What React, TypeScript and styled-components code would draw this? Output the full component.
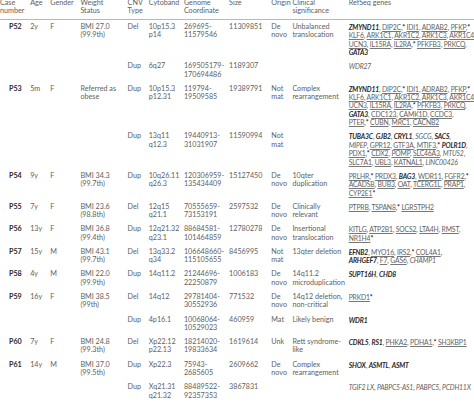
import React from 'react';
import styled, { createGlobalStyle } from 'styled-components';

const GlobalStyle = createGlobalStyle`
  html, body {
    margin: 0;
    padding: 0;
    background: #fff;
    overflow: hidden;
  }
  body {
    font-family: Lato, "Open Sans", "Liberation Sans", sans-serif;
  }
`;

const Table = styled.table`
  border-collapse: collapse;
  table-layout: fixed;
  width: 600px;
  margin-top: -2.2px;
  font-size: 7.2px;
  line-height: 8.4px;
  color: #616161;
`;

const HeadCell = styled.th`
  text-align: left;
  font-weight: 400;
  vertical-align: top;
  padding: 1px 0 3.3px 0;
  border-bottom: 0.8px solid #b8b8b8;
  white-space: nowrap;
`;

const Cell = styled.td`
  vertical-align: top;
  padding: 2.9px 0 2.9px 0;
  white-space: nowrap;
`;

const CaseCell = styled(Cell)`
  font-weight: 700;
  color: #2a2a2a;
  padding-left: 9px;
`;

const TextLine = styled.div`
  height: 8.4px;
  line-height: 8.4px;
  white-space: nowrap;
`;

const GeneRow = styled(TextLine)`
  font-size: 6.8px;
  letter-spacing: -0.16px;
`;

const BoldGene = styled.b`
  font-weight: 700;
  font-style: italic;
  color: #1f1f1f;
`;

const LinkGene = styled.span`
  text-decoration: underline;
  text-decoration-color: #777;
  text-underline-offset: 1px;
`;

const ItalicGene = styled.i`
  font-style: italic;
`;

const Star = styled.span`
  font-weight: 700;
  color: #222;
`;

type Row = {
  id?: string;
  age?: string;
  sex?: string;
  weight?: string[];
  type: string;
  band: string[];
  coord: string[];
  size: string;
  origin?: string[];
  clin?: string[];
  genes: string[];
};

const b1 = '!ZMYND11, _DIP2C,* _IDI1, _ADRAB2, _PFKP,*';
const b2 = '_KLF6, _ARK1C1, _AKR1C2, _ARK1C3, _AKR1C4,';
const b3 = '_UCN3, _IL15RA, _IL2RA,* _PFKFB3, _PRKCQ,';

const rows: Row[] = [
  { id: 'P52', age: '2y', sex: 'F', weight: ['BMI 27.0', '(99.9th)'], type: 'Del', band: ['10p15.3', 'p14'], coord: ['269695-', '11579546'], size: '11309851', origin: ['De', 'novo'], clin: ['Unbalanced', 'translocation'], genes: [b1, b2, b3, '!GATA3'] },
  { type: 'Dup', band: ['6q27'], coord: ['169505179-', '170694486'], size: '1189307', genes: ['~WDR27'] },
  { id: 'P53', age: '5m', sex: 'F', weight: ['Referred as', 'obese'], type: 'Dup', band: ['10p15.3', 'p12.31'], coord: ['119794-', '19509585'], size: '19389791', origin: ['Not', 'mat'], clin: ['Complex', 'rearrangement'], genes: [b1, b2, b3, '!GATA3, _CDC123, _CAMK1D, _CCDC3,', '_PTER,* _CUBN, _MRC1, _CACNB2'] },
  { type: 'Dup', band: ['13q11', 'q12.3'], coord: ['19440913-', '31031907'], size: '11590994', origin: ['Not', 'mat'], genes: ['!TUBA3C, !GJB2, !CRYL1, ~SGCG, !SACS,', '~MIPEP, _GPR12, _GTF3A, _MTIF3,* !POLR1D,', '_PDX1,* _CDX2, _POMP, _SLC46A3, ~MTUS2,', '_SLC7A1, _UBL3, _KATNAL1, ~LINC00426'] },
  { id: 'P54', age: '9y', sex: 'F', weight: ['BMI 34.3', '(99.7th)'], type: 'Dup', band: ['10q26.11', 'q26.3'], coord: ['120306959-', '135434409'], size: '15127450', origin: ['De', 'novo'], clin: ['10qter', 'duplication'], genes: ['_PRLHR,* _PRDX3, !BAG3, _WDR11, _FGFR2,*', '_ACADSB, _BUB3, _OAT, _TCERG1L, _PRAP1,', '_CYP2E1*'] },
  { id: 'P55', age: '7y', sex: 'F', weight: ['BMI 23.6', '(98.8th)'], type: 'Del', band: ['12q15', 'q21.1'], coord: ['70555659-', '73153191'], size: '2597532', origin: ['De', 'novo'], clin: ['Clinically', 'relevant'], genes: ['_PTPRB, _TSPAN8,* _LGR5TPH2'] },
  { id: 'P56', age: '13y', sex: 'F', weight: ['BMI 36.8', '(99.4th)'], type: 'Dup', band: ['12q21.32', 'q23.1'], coord: ['88684581-', '101464859'], size: '12780278', origin: ['De', 'novo'], clin: ['Insertional', 'translocation'], genes: ['_KITLG, _ATP2B1, _SOCS2, _LTA4H, _RMST,', '_NR1H4*'] },
  { id: 'P57', age: '15y', sex: 'M', weight: ['BMI 43.1', '(99.7th)'], type: 'Del', band: ['13q33.2', 'q34'], coord: ['106648660-', '115105655'], size: '8456995', origin: ['Not', 'mat'], clin: ['13qter deletion'], genes: ['!EFNB2, _MYO16, _IRS2,* _COL4A1,', '!ARHGEF7, _F7, _GAS6, ~CHAMP1'] },
  { id: 'P58', age: '4y', sex: 'M', weight: ['BMI 22.0', '(99.9th)'], type: 'Dup', band: ['14q11.2'], coord: ['21244696-', '22250879'], size: '1006183', origin: ['De', 'novo'], clin: ['14q11.2', 'microduplication'], genes: ['!SUPT16H, !CHD8'] },
  { id: 'P59', age: '16y', sex: 'F', weight: ['BMI 38.5', '(99th)'], type: 'Del', band: ['14q12'], coord: ['29781404-', '30552936'], size: '771532', origin: ['De', 'novo'], clin: ['14q12 deletion,', 'non-critical'], genes: ['_PRKD1*'] },
  { type: 'Dup', band: ['4p16.1'], coord: ['10068064-', '10529023'], size: '460959', origin: ['Mat'], clin: ['Likely benign'], genes: ['!WDR1'] },
  { id: 'P60', age: '7y', sex: 'F', weight: ['BMI 24.8', '(99.3th)'], type: 'Del', band: ['Xp22.12', 'p22.13'], coord: ['18214020-', '19833634'], size: '1619614', origin: ['Unk'], clin: ['Rett syndrome-', 'like'], genes: ['!CDKL5, !RS1, _PHKA2, _PDHA1,* _SH3KBP1'] },
  { id: 'P61', age: '14y', sex: 'M', weight: ['BMI 37.0', '(99.5th)'], type: 'Dup', band: ['Xp22.3'], coord: ['75943-', '2685605'], size: '2609662', origin: ['De', 'novo'], clin: ['Complex', 'rearrangement'], genes: ['!SHOX, !ASMTL, !ASMT'] },
  { type: 'Dup', band: ['Xq21.31', 'q21.32'], coord: ['88489522-', '92357353'], size: '3867831', genes: ['~TGIF2 LX, ~PABPC5-AS1, ~PABPC5, ~PCDH11X'] },
];

const widths = [30, 20, 30, 47, 21, 35, 45, 42, 21, 56, 250];
const headers = [
  ['Case', 'number'], ['Age'], ['Gender'], ['Weight', 'Status'], ['CNV', 'Type'],
  ['Cytoband'], ['Genome', 'Coordinate'], ['Size'], ['Origin'], ['Clinical', 'significance'], ['RefSeq genes'],
];

const Lines = ({ items }: { items?: string[] }) => (
  <>
    {(items || []).map((t, i) => (
      <TextLine key={i}>{t}</TextLine>
    ))}
  </>
);

const GeneLine = ({ line }: { line: string }) => {
  const tokens = line.split(/(?<=[,*])\s+/);
  return (
    <GeneRow>
      {tokens.map((tok, i) => {
        const m = tok.match(/^([!_~]?)(.+?)([,*]*)$/);
        if (!m) return null;
        const [, kind, name, tail] = m;
        const gene =
          kind === '!' ? <BoldGene>{name}</BoldGene>
          : kind === '_' ? <LinkGene>{name}</LinkGene>
          : kind === '~' ? <ItalicGene>{name}</ItalicGene>
          : <span>{name}</span>;
        return (
          <React.Fragment key={i}>
            {i > 0 && ' '}
            {gene}
            {tail.includes(',') && ','}
            {tail.includes('*') && <Star>*</Star>}
          </React.Fragment>
        );
      })}
    </GeneRow>
  );
};

export default function App() {
  return (
    <>
      <GlobalStyle />
      <Table>
        <colgroup>
          {widths.map((w, i) => <col key={i} style={{ width: w }} />)}
        </colgroup>
        <thead>
          <tr>
            {headers.map((h, i) => (
              <HeadCell key={i}><Lines items={h} /></HeadCell>
            ))}
          </tr>
        </thead>
        <tbody>
          {rows.map((r, i) => (
            <tr key={i}>
              <CaseCell><TextLine>{r.id}</TextLine></CaseCell>
              <Cell><TextLine>{r.age}</TextLine></Cell>
              <Cell><TextLine>{r.sex}</TextLine></Cell>
              <Cell><Lines items={r.weight} /></Cell>
              <Cell><TextLine>{r.type}</TextLine></Cell>
              <Cell><Lines items={r.band} /></Cell>
              <Cell><Lines items={r.coord} /></Cell>
              <Cell><TextLine>{r.size}</TextLine></Cell>
              <Cell><Lines items={r.origin} /></Cell>
              <Cell><Lines items={r.clin} /></Cell>
              <Cell>
                {r.genes.map((g, j) => (
                  <GeneLine key={j} line={g} />
                ))}
              </Cell>
            </tr>
          ))}
        </tbody>
      </Table>
    </>
  );
}
